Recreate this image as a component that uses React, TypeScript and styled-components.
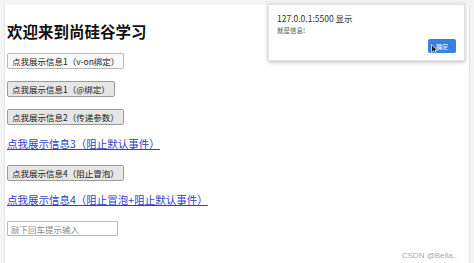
import React from "react";
import styled, { createGlobalStyle } from "styled-components";

const Global = createGlobalStyle`
  html, body { margin: 0; padding: 0; background: #f4f4f4; }
  body { font-family: "Noto Sans CJK SC", "Noto Sans", sans-serif; overflow: hidden; }
`;

const Frame = styled.div`
  position: relative;
  margin: 5px 0 0 4px;
  width: 466px;
  height: 258px;
  background: #ffffff;
  border-left: 1px solid #e4e4e4;
  border-right: 1px solid #e4e4e4;
  box-sizing: border-box;
  padding: 15px 0 0 2px;
`;

const Title = styled.h1`
  margin: 0 0 11px 0;
  font-size: 15.5px;
  line-height: 22px;
  font-weight: 700;
  color: #111;
`;

const List = styled.div`
  display: grid;
  grid-auto-rows: 28px;
  align-items: start;
  justify-items: start;
`;

const Btn = styled.button<{ $light?: boolean }>`
  font-family: "Noto Sans CJK SC", sans-serif;
  font-size: 8.5px;
  line-height: 12px;
  height: 16px;
  padding: 0 4px;
  color: #222;
  background: ${(p) => (p.$light ? "#f9f9f9" : "#e6e6e6")};
  border: 1px solid ${(p) => (p.$light ? "#b8b8b8" : "#9a9a9a")};
  border-radius: 2px;
  white-space: nowrap;
`;

const Link = styled.a`
  font-size: 10.5px;
  line-height: 15px;
  color: #2d3ecb;
  text-decoration: underline;
  margin-top: -1px;
`;

const Input = styled.input`
  font-family: "Noto Sans CJK SC", sans-serif;
  font-size: 8.5px;
  width: 111px;
  height: 15px;
  box-sizing: border-box;
  padding: 0 3px;
  border: 1px solid #b8b8b8;
  border-radius: 1px;
  outline: none;
  &::placeholder { color: #8a8a8a; }
`;

const Alert = styled.div`
  position: absolute;
  left: 263px;
  top: -1px;
  width: 197px;
  height: 57px;
  background: #fff;
  border: 1px solid #e2e2e2;
  box-shadow: 0 1px 4px rgba(0, 0, 0, 0.28);
  box-sizing: border-box;
  padding: 7px 8px 0 8px;
  display: flex;
  flex-direction: column;
`;

const AlertTitle = styled.div`
  font-size: 8.5px;
  line-height: 12px;
  color: #333;
`;

const AlertMsg = styled.div`
  font-size: 6.5px;
  line-height: 10px;
  color: #555;
  margin-top: 1px;
`;

const AlertFooter = styled.div`
  display: flex;
  justify-content: flex-end;
  margin-top: 4px;
`;

const OkBtn = styled.div`
  position: relative;
  width: 28px;
  height: 14px;
  background: #3a7fe2;
  border-radius: 2px;
  color: #fff;
  font-size: 6px;
  display: flex;
  align-items: center;
  justify-content: center;
`;

const Cursor = styled.svg`
  position: absolute;
  left: 3px;
  top: 5px;
`;

const Watermark = styled.div`
  position: absolute;
  right: 12px;
  bottom: 3px;
  font-family: "Liberation Sans", sans-serif;
  font-size: 8px;
  color: #a8a8a8;
`;

export default function App() {
  return (
    <>
      <Global />
      <Frame>
        <Title>欢迎来到尚硅谷学习</Title>
        <List>
          <Btn $light>点我展示信息1（v-on绑定）</Btn>
          <Btn>点我展示信息1（@绑定）</Btn>
          <Btn>点我展示信息2（传递参数）</Btn>
          <Link href="#">点我展示信息3（阻止默认事件）</Link>
          <Btn>点我展示信息4（阻止冒泡）</Btn>
          <Link href="#">点我展示信息4（阻止冒泡+阻止默认事件）</Link>
          <Input placeholder="敲下回车提示输入" />
        </List>
        <Alert>
          <AlertTitle>127.0.0.1:5500 显示</AlertTitle>
          <AlertMsg>就是信息!</AlertMsg>
          <AlertFooter>
            <OkBtn>
              确定
              <Cursor width="7" height="10" viewBox="0 0 7 10">
                <path d="M0.5 0.5 L0.5 8.5 L2.5 6.8 L4 9.5 L5.2 9 L3.9 6.3 L6.3 6.2 Z" fill="#222" stroke="#fff" strokeWidth="0.7" />
              </Cursor>
            </OkBtn>
          </AlertFooter>
        </Alert>
        <Watermark>CSDN @Bella..</Watermark>
      </Frame>
    </>
  );
}
